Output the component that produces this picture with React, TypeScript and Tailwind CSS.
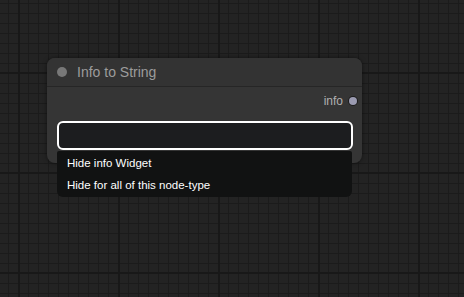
import React from "react";

const gridBg =
  "[background-image:linear-gradient(#181818_2px,transparent_2px),linear-gradient(90deg,#181818_2px,transparent_2px),linear-gradient(#1b1b1b_1px,transparent_1px),linear-gradient(90deg,#1b1b1b_1px,transparent_1px)] [background-size:100px_100px,100px_100px,10px_10px,10px_10px] [background-position:0px_72px,18px_0px,0px_3px,8px_0px]";

const menuItems = ["Hide info Widget", "Hide for all of this node-type"];

export default function App() {
  return (
    <div
      className={`relative w-[464px] h-[297px] overflow-hidden bg-[#232323] ${gridBg} font-['Liberation_Sans',Arial,sans-serif]`}
    >
      {/* Node */}
      <div className="absolute left-[47px] top-[58px] w-[315px] h-[105px] rounded-lg bg-[#353535] shadow-[0_0_4px_rgba(0,0,0,0.5)] flex flex-col">
        <div className="h-[29px] flex items-center gap-[10px] pl-[10px] border-b border-[#262626] rounded-t-lg bg-[#333333]">
          <span className="w-[10px] h-[10px] rounded-full bg-[#787878]" />
          <span className="text-[14px] text-[#9c9c9c] leading-none">Info to String</span>
        </div>
        <div className="flex items-center justify-end h-[26px] pr-[5px] gap-[6px] mt-px">
          <span className="text-[12px] text-[#b0b0b0] leading-none">info</span>
          <span className="w-[8px] h-[8px] rounded-full bg-[#9a9ab0] ring-1 ring-[#1c1c1c]" />
        </div>
        <div className="mt-[7px] mx-[10px] mr-[9px] h-[29px] rounded-[6px] border-2 border-white bg-[#1c1d1f]" />
      </div>

      {/* Context menu */}
      <div className="absolute left-[57px] top-[151px] w-[295px] h-[46px] pt-px rounded-b-[6px] rounded-t-[2px] bg-[#111212] flex flex-col">
        {menuItems.map((item) => (
          <div key={item} className="h-[23px] flex items-center pl-[10px] text-[11.5px] text-white leading-none">
            {item}
          </div>
        ))}
      </div>
    </div>
  );
}
